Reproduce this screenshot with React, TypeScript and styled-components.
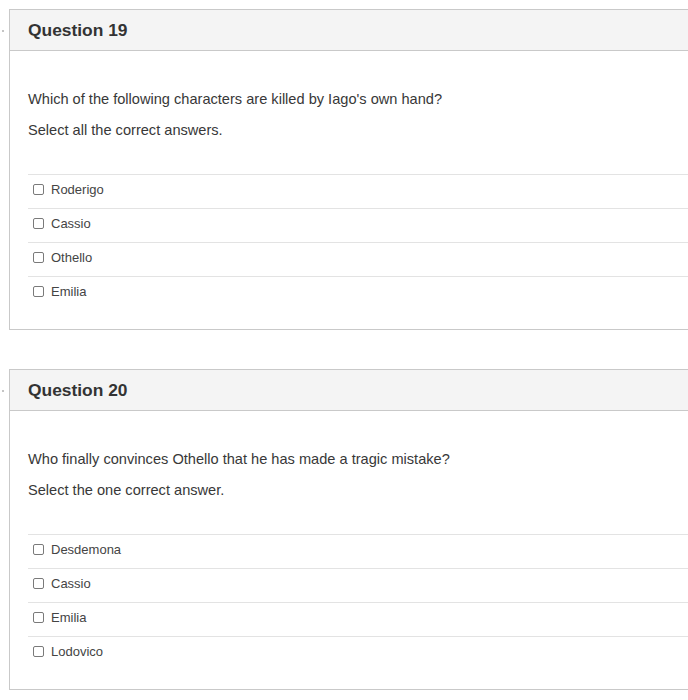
import React from "react";
import styled, { createGlobalStyle } from "styled-components";

const GlobalStyle = createGlobalStyle`
  html, body {
    margin: 0;
    padding: 0;
    background: #ffffff;
  }
  body {
    font-family: "Liberation Sans", Arial, Helvetica, sans-serif;
    color: #333;
  }
`;

const Page = styled.div`
  position: relative;
  padding: 9px 0 0 9px;
  width: 688px;
  box-sizing: border-box;
  overflow: hidden;
`;

const Card = styled.section`
  position: relative;
  border: 1px solid #c9c9c9;
  border-right: none;
  margin-bottom: 39px;
  background: #fff;
`;

const Marker = styled.span`
  position: absolute;
  left: -8px;
  top: 20px;
  width: 2px;
  height: 2px;
  background: #c4c4c4;
`;

const Header = styled.header`
  height: 39px;
  display: flex;
  align-items: center;
  padding: 1px 0 0 18px;
  background: #f4f4f4;
  border-bottom: 1px solid #c9c9c9;
`;

const Title = styled.h2`
  margin: 0;
  font-size: 17.4px;
  font-weight: bold;
  color: #333;
`;

const Body = styled.div`
  padding: 38px 0 19px 18px;
`;

const Prompt = styled.p<{ $gap?: number }>`
  margin: 0 0 ${(p) => p.$gap ?? 0}px;
  font-size: 14.6px;
  line-height: 20px;
  color: #383838;
`;

const Options = styled.ul`
  list-style: none;
  margin: 0;
  padding: 0;
  border-top: 1px solid #e3e3e3;
`;

const Option = styled.li`
  height: 33px;
  box-sizing: border-box;
  display: flex;
  align-items: center;
  padding: 0 0 5px 5px;
  gap: 7px;
  font-size: 13px;
  color: #444;
  & + & {
    border-top: 1px solid #e3e3e3;
    height: 34px;
    padding-top: 1px;
  }
`;

const Box = styled.span`
  width: 9px;
  height: 9px;
  border: 1px solid #7a7a7a;
  border-radius: 2px;
  background: #fff;
  flex: none;
`;

type Q = { n: number; text: string; hint: string; options: string[] };

const questions: Q[] = [
  {
    n: 19,
    text: "Which of the following characters are killed by Iago's own hand?",
    hint: "Select all the correct answers.",
    options: ["Roderigo", "Cassio", "Othello", "Emilia"],
  },
  {
    n: 20,
    text: "Who finally convinces Othello that he has made a tragic mistake?",
    hint: "Select the one correct answer.",
    options: ["Desdemona", "Cassio", "Emilia", "Lodovico"],
  },
];

export default function App() {
  return (
    <>
      <GlobalStyle />
      <Page>
        {questions.map((q) => (
          <Card key={q.n}>
            <Marker />
            <Header>
              <Title>Question {q.n}</Title>
            </Header>
            <Body>
              <Prompt $gap={11}>{q.text}</Prompt>
              <Prompt $gap={34}>{q.hint}</Prompt>
              <Options>
                {q.options.map((o) => (
                  <Option key={o}>
                    <Box />
                    {o}
                  </Option>
                ))}
              </Options>
            </Body>
          </Card>
        ))}
      </Page>
    </>
  );
}
